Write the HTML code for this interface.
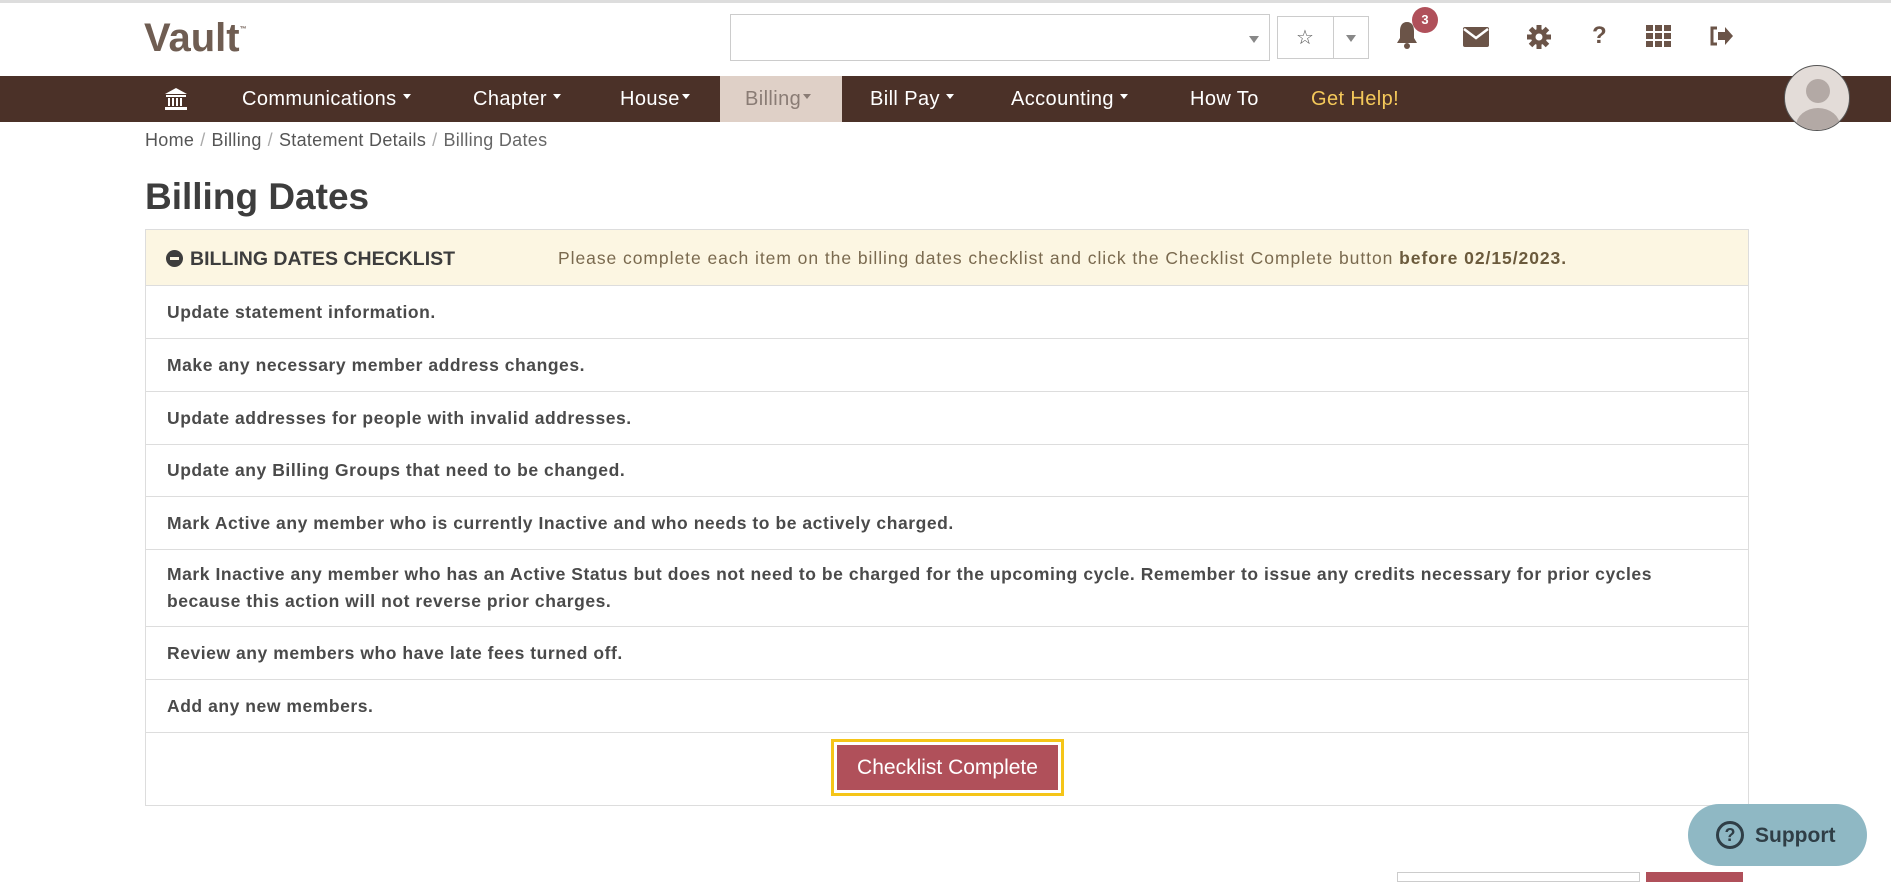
<!DOCTYPE html>
<html><head><meta charset="utf-8"><style>
*{box-sizing:border-box;margin:0;padding:0}
body{width:1891px;height:880px;overflow:hidden;background:#fff;font-family:"Liberation Sans",Arial,sans-serif;color:#444;position:relative}
.abs{position:absolute}
.topline{top:0;left:0;width:1891px;height:3px;background:#ddd}
.logo{left:144px;top:16px;font-size:40px;color:#6f5d52;font-weight:bold;letter-spacing:0}
.logo sup{font-size:7px;vertical-align:top;position:relative;top:10px}
.search{left:730px;top:14px;width:540px;height:47px;border:1px solid #ccc}
.search:after{content:"";position:absolute;right:10px;top:21px;border:5px solid transparent;border-top:7px solid #888}
.star{left:1277px;top:16px;width:92px;height:43px;border:1px solid #ccc}
.star .sep{position:absolute;left:55px;top:0;bottom:0;border-left:1px solid #ccc}
.icon{color:#6b5448;font-size:24px;font-weight:bold}
.nav{top:76px;left:0;width:1891px;height:46px;background:#4b3128}
.nav span{position:absolute;top:12px;color:#fff;font-size:20px;letter-spacing:0.4px}
.caret{display:inline-block;border:4px solid transparent;border-top:5px solid currentColor;margin-left:6px;vertical-align:2px}
.billing{left:720px;top:76px;width:122px;height:46px;background:#dfd0c7}
.avatar{left:1784px;top:65px;width:66px;height:66px;border-radius:50%;background:#e3dcd8;border:1px solid #555;overflow:hidden}
.crumb{left:145px;top:130px;font-size:18px;color:#555;letter-spacing:0.3px}
.crumb i{font-style:normal;color:#aaa;margin:0 6px}
h1{position:absolute;left:145px;top:176px;font-size:37px;color:#3d3d3d;font-weight:bold}
.panel{left:145px;top:229px;width:1604px;height:577px;border:1px solid #ddd}
.phead{position:absolute;left:0;top:0;right:0;height:56px;background:#fcf6e2;border-bottom:1px solid #ddd}
.row{position:absolute;left:0;right:0;border-bottom:1px solid #ddd;font-size:17.5px;letter-spacing:0.55px;font-weight:bold;color:#4a4a4a;padding-left:21px;white-space:nowrap}
.btnwrap{left:831px;top:739px;width:233px;height:57px;border:3px solid #f5c518;padding:3px}
.btn{width:100%;height:100%;background:#b0505a;color:#fff;font-size:21px;text-align:center;line-height:45px}
.support{left:1688px;top:804px;width:179px;height:62px;border-radius:31px;background:#8fb8c4;color:#2f3e46;font-weight:bold;font-size:21px}
</style></head><body>
<div class="abs topline"></div>
<div class="abs logo">Vault<sup>™</sup></div>
<div class="abs search"></div>
<div class="abs star"><span style="position:absolute;left:18px;top:8px;font-size:20px;color:#555">☆</span><div class="sep"></div><span style="position:absolute;left:68px;top:18px;border:5px solid transparent;border-top:7px solid #888"></span></div>
<svg class="abs" style="left:1393px;top:20px" width="28" height="32" viewBox="0 0 28 32"><path d="M14 2c-5 0-7 4-7 9v7l-3 5h20l-3-5v-7c0-5-2-9-7-9z" fill="#6b5448"/><circle cx="14" cy="26" r="3" fill="#6b5448"/></svg>
<div class="abs" style="left:1412px;top:7px;width:26px;height:26px;border-radius:50%;background:#b0505a;color:#fff;font-size:13px;font-weight:bold;text-align:center;line-height:26px">3</div>
<svg class="abs" style="left:1463px;top:27px" width="26" height="20"><rect width="26" height="20" rx="2" fill="#6b5448"/><path d="M1 2l12 9 12-9" stroke="#fff" stroke-width="2.5" fill="none"/></svg>
<svg class="abs" style="left:1527px;top:25px" width="24" height="24" viewBox="0 0 24 24"><g fill="#6b5448"><circle cx="12" cy="12" r="8"/><rect x="9.5" y="0" width="5" height="24"/><rect x="0" y="9.5" width="24" height="5"/><rect x="9.5" y="0" width="5" height="24" transform="rotate(45 12 12)"/><rect x="9.5" y="0" width="5" height="24" transform="rotate(-45 12 12)"/></g><circle cx="12" cy="12" r="3.5" fill="#fff"/></svg>
<div class="abs icon" style="left:1592px;top:22px">?</div>
<svg class="abs" style="left:1646px;top:25px" width="25" height="22"><g fill="#6b5448"><rect x="0" y="0" width="7" height="6"/><rect x="9" y="0" width="7" height="6"/><rect x="18" y="0" width="7" height="6"/><rect x="0" y="8" width="7" height="6"/><rect x="9" y="8" width="7" height="6"/><rect x="18" y="8" width="7" height="6"/><rect x="0" y="16" width="7" height="6"/><rect x="9" y="16" width="7" height="6"/><rect x="18" y="16" width="7" height="6"/></g></svg>
<svg class="abs" style="left:1709px;top:26px" width="24" height="20"><path d="M8 2H3v16h5" stroke="#6b5448" stroke-width="3" fill="none"/><path d="M9 6h7V1l8 9-8 9v-5H9z" fill="#6b5448"/></svg>
<div class="abs nav"></div>
<div class="abs billing"></div>
<div class="abs" style="top:76px;left:0;width:1891px;height:46px">
<svg class="abs" style="left:164px;top:11px" width="24" height="24"><g fill="#fff"><path d="M12 1L1 7h22z"/><rect x="2" y="8" width="20" height="2"/><rect x="4" y="11" width="2" height="8"/><rect x="8" y="11" width="2" height="8"/><rect x="12" y="11" width="2" height="8"/><rect x="16" y="11" width="2" height="8"/><rect x="1" y="20" width="22" height="3"/></g></svg>
</div>
<div class="abs nav" style="background:transparent">
<span style="left:242px">Communications<i class="caret"></i></span>
<span style="left:473px">Chapter<i class="caret"></i></span>
<span style="left:620px">House<i class="caret" style="margin-left:2px"></i></span>
<span style="left:745px;color:#8a7c75">Billing<i class="caret" style="margin-left:2px"></i></span>
<span style="left:870px">Bill Pay<i class="caret"></i></span>
<span style="left:1011px">Accounting<i class="caret"></i></span>
<span style="left:1190px">How To</span>
<span style="left:1311px;color:#f5c95a">Get Help!</span>
</div>
<div class="abs avatar"><svg width="66" height="66"><circle cx="33" cy="25" r="12" fill="#b3a9a5"/><ellipse cx="33" cy="60" rx="22" ry="18" fill="#b3a9a5"/></svg></div>
<div class="abs crumb">Home<i>/</i>Billing<i>/</i>Statement Details<i>/</i><span style="color:#666">Billing Dates</span></div>
<h1>Billing Dates</h1>
<div class="abs panel">
<div class="phead">
<div style="position:absolute;left:20px;top:20px;width:17px;height:17px;border-radius:50%;background:#3d3d3d"><div style="position:absolute;left:4px;top:7px;width:9px;height:3px;background:#fcf6e2"></div></div>
<div style="position:absolute;left:44px;top:18px;font-size:19.5px;font-weight:bold;color:#3d3d3d">BILLING DATES CHECKLIST</div>
<div style="position:absolute;left:412px;top:18px;font-size:17.5px;letter-spacing:0.95px;color:#7a6a4f;white-space:nowrap">Please complete each item on the billing dates checklist and click the Checklist Complete button <b style="color:#6b5a3c">before 02/15/2023.</b></div>
</div>
<div class="row" style="top:56px;height:53px;line-height:52px">Update statement information.</div>
<div class="row" style="top:109px;height:53px;line-height:52px">Make any necessary member address changes.</div>
<div class="row" style="top:162px;height:53px;line-height:52px">Update addresses for people with invalid addresses.</div>
<div class="row" style="top:215px;height:52px;line-height:51px">Update any Billing Groups that need to be changed.</div>
<div class="row" style="top:267px;height:53px;line-height:52px">Mark Active any member who is currently Inactive and who needs to be actively charged.</div>
<div class="row" style="top:320px;height:77px;line-height:27px;padding-top:11px">Mark Inactive any member who has an Active Status but does not need to be charged for the upcoming cycle. Remember to issue any credits necessary for prior cycles<br>because this action will not reverse prior charges.</div>
<div class="row" style="top:397px;height:53px;line-height:52px">Review any members who have late fees turned off.</div>
<div class="row" style="top:450px;height:53px;line-height:52px">Add any new members.</div>
</div>
<div class="abs btnwrap"><div class="btn">Checklist Complete</div></div>
<div class="abs support"><div style="position:absolute;left:28px;top:17px;width:28px;height:28px;border:3px solid #2f3e46;border-radius:50%;text-align:center;line-height:22px;font-size:18px">?</div><div style="position:absolute;left:67px;top:20px">Support</div></div>
<div class="abs" style="left:1397px;top:872px;width:243px;height:10px;border:1px solid #ccc"></div>
<div class="abs" style="left:1646px;top:872px;width:97px;height:10px;background:#b0505a"></div>
</body></html>
